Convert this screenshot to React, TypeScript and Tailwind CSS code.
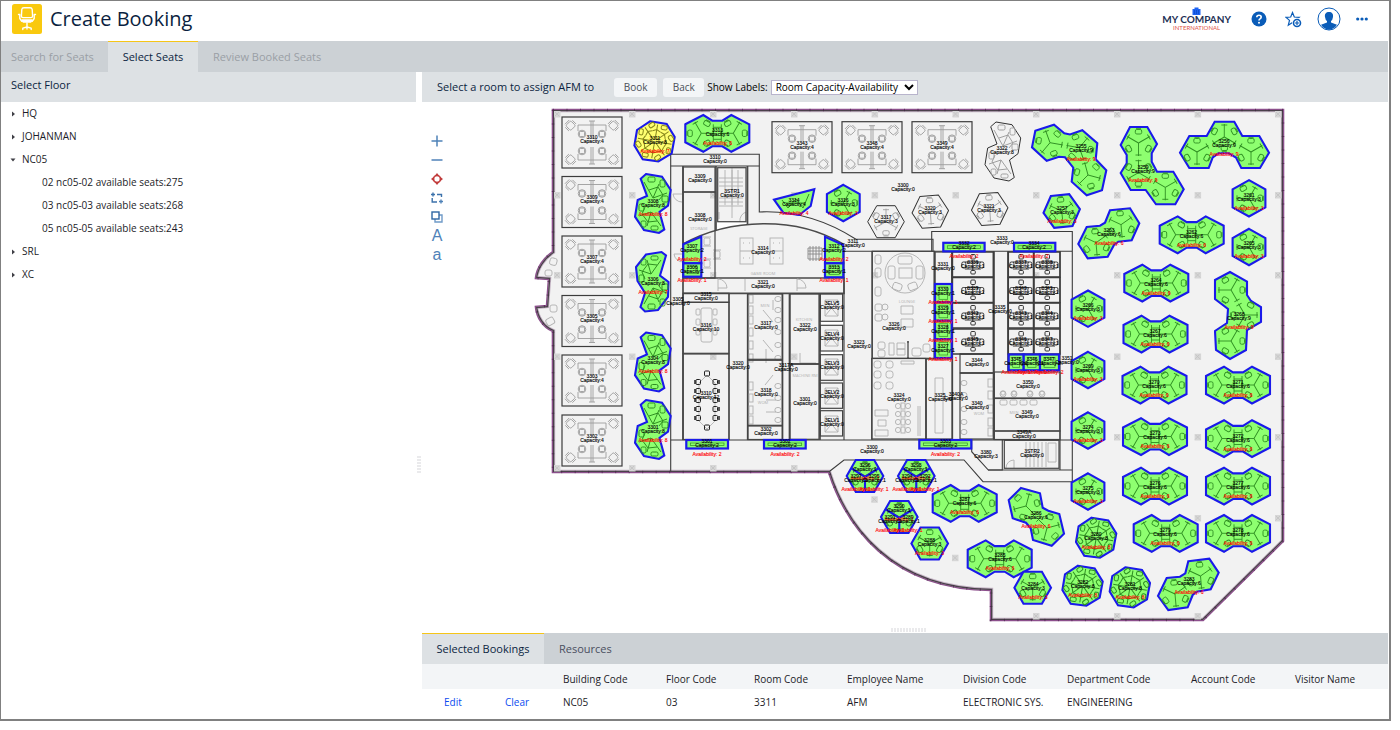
import React, { useState } from "react";

type Pt = [number, number];
type Tone = "green" | "yellow" | "plain";

const FILLS: Record<Tone, string> = { green: "#8eff70", yellow: "#ffff70", plain: "#f2f2f2" };
const INK: Record<Tone, string> = { green: "#2f8f22", yellow: "#85851a", plain: "#a0a0a0" };

const ROOM_BLUE = "#1a1aea";

/* ---------- furniture ---------- */

function Pod({ x, y, r = 0, c = INK.green }: { x: number; y: number; r?: number; c?: string }) {
  return (
    <g transform={`translate(${x} ${y}) rotate(${r})`} fill="none" stroke={c} strokeWidth={0.9}>
      {[0, 120, 240].map((a) => (
        <g key={a} transform={`rotate(${a})`}>
          <path d="M0 0H13M12 -3V3" />
          <g transform="rotate(60) translate(11 0)">
            <rect x={-2} y={-3.2} width={4.5} height={6.4} rx={1.5} />
            <path d="M3.3 -2.5V2.5" />
          </g>
        </g>
      ))}
    </g>
  );
}

function Desk({ x, y }: { x: number; y: number }) {
  return (
    <g transform={`translate(${x} ${y})`}>
      <rect width={60} height={51} fill="#f2f2f2" stroke="#3c3c3c" strokeWidth={1.2} />
      <g fill="none" stroke="#9c9c9c" strokeWidth={0.9}>
        <path d="M16 8H44M16 43H44M16 8V14M44 8V14M16 37V43M44 37V43M29 4V21M31 4V21M29 30V47M31 30V47M27 4H33M27 47H33" />
        {[
          [9, 9, 45],
          [51, 9, 135],
          [9, 42, -45],
          [51, 42, 225],
        ].map(([cx, cy, r]) => (
          <g key={`${cx}-${cy}`} transform={`translate(${cx} ${cy}) rotate(${r})`}>
            <rect x={-4} y={-3.5} width={7} height={7} rx={1.5} />
            <path d="M-5.5 -3V3M-3 -5H2M-3 5H2" />
          </g>
        ))}
        {[
          [20, 17],
          [40, 17],
          [20, 34],
          [40, 34],
        ].map(([cx, cy]) => (
          <g key={`${cx}-${cy}`}>
            <circle cx={cx} cy={cy} r={3.8} />
            <rect x={cx - 2.5} y={cy - 2.5} width={5} height={5} rx={1} />
          </g>
        ))}
      </g>
    </g>
  );
}

function Shape({ pts, tone = "green" }: { pts: Pt[]; tone?: Tone }) {
  return (
    <polygon
      points={pts.map((p) => p.join(",")).join(" ")}
      fill={FILLS[tone]}
      stroke={tone === "plain" ? "#333" : ROOM_BLUE}
      strokeWidth={tone === "plain" ? 1 : 2.1}
    />
  );
}

const DUMBBELL: Pt[] = [
  [-32, -9], [-14, -18.3], [-5, -12.6], [5, -12.6], [14, -18.3], [32, -9],
  [32, 9], [14, 18.5], [5, 13], [-5, 13], [-14, 18.5], [-32, 9],
];
const OCTAGON: Pt[] = [
  [-4.7, -20], [12, -17.3], [20, -4.3], [17, 12], [3.7, 20], [-12, 18], [-20.3, 4.3], [-17.7, -11.3],
];
const HEX_TALL: Pt[] = [[0, -18.2], [16.4, -9], [16.4, 9], [0, 18.2], [-16.4, 9], [-16.4, -9]];
const HEX_FLAT: Pt[] = [[-9.2, -16], [9.2, -16], [18.3, 0], [9.2, 16], [-9.2, 16], [-18.3, 0]];
const KIDNEY: Pt[] = [
  [-7, -30], [9, -27.3], [17.7, -14], [15, 1.7], [6.5, 8], [11.3, 25.5],
  [6, 29], [-9, 26], [-18, 12.7], [-15.3, -4], [-6, -8], [-12.3, -25.3],
];

function Dumbbell({ x, y }: { x: number; y: number }) {
  return (
    <g transform={`translate(${x} ${y})`}>
      <Shape pts={DUMBBELL} />
      <Pod x={-16} y={0} r={0} />
      <Pod x={16} y={0} r={180} />
      <path d="M-4 -9V9M4 -9V9M-4 -6H4M-4 6H4" stroke={INK.green} strokeWidth={0.9} fill="none" />
    </g>
  );
}

function Octagon({ x, y, tone = "green" }: { x: number; y: number; tone?: Tone }) {
  return (
    <g transform={`translate(${x} ${y})`}>
      <Shape pts={OCTAGON} tone={tone} />
      <g fill="none" stroke={INK[tone]} strokeWidth={1}>
        {[0, 45, 90, 135, 180, 225, 270, 315].map((a) => (
          <g key={a} transform={`rotate(${a + 10})`}>
            <path d="M2 0H17M10 -4L12 0L10 4" />
            <rect x={13} y={4} width={4} height={6} rx={1.5} />
          </g>
        ))}
      </g>
    </g>
  );
}

function Hex({ x, y, flat, r = 0, pod = 30, tone = "green" }: { x: number; y: number; flat?: boolean; r?: number; pod?: number; tone?: Tone }) {
  return (
    <g transform={`translate(${x} ${y}) rotate(${r})`}>
      <Shape pts={flat ? HEX_FLAT : HEX_TALL} tone={tone} />
      <Pod x={0} y={0} r={pod} c={INK[tone]} />
    </g>
  );
}

function Fan({ c }: { c: string }) {
  return (
    <g fill="none" stroke={c} strokeWidth={1}>
      <path d="M0 -6L-9 -22M0 -6L6 -20M0 -6L14 -11M-4 -14L5 -17L10 -9L6 -4" />
      <path d="M-2 8L8 22M-2 8L-6 22M-2 8L-14 12M4 17L-5 18L-11 10L-8 3" />
      <rect x={-5} y={-27} width={7} height={5} rx={1.5} />
      <rect x={7} y={-24} width={5} height={7} rx={1.5} />
      <rect x={9} y={-8} width={6} height={6} rx={1.5} />
      <rect x={-2} y={22} width={7} height={4} rx={1.5} />
      <rect x={-12} y={17} width={5} height={6} rx={1.5} />
      <rect x={-14} y={0} width={5} height={7} rx={1.5} />
    </g>
  );
}

function Kidney({ x, y, tone = "green" }: { x: number; y: number; tone?: Tone }) {
  return (
    <g transform={`translate(${x} ${y})`}>
      <Shape pts={KIDNEY} tone={tone} />
      <Fan c={INK[tone]} />
    </g>
  );
}

function TriHex({ x, y }: { x: number; y: number }) {
  return (
    <g transform={`translate(${x} ${y})`}>
      <Shape pts={HEX_FLAT} />
      <Pod x={0} y={0} r={-30} />
      <path d="M-14 -8L0 1L14 -8M0 1V16" fill="none" stroke={ROOM_BLUE} strokeWidth={2.1} />
    </g>
  );
}

const BRANCHED: { pts: Pt[]; pods: [number, number, number][] }[] = [
  {
    pts: [[1035.3, 130.7], [1054, 124.7], [1064.3, 133.3], [1070, 134.5], [1082.3, 130.3], [1097.3, 143.3], [1095.7, 159.3], [1106.3, 170.3], [1102, 190.3], [1086.7, 195.3], [1071.7, 181.7], [1073.3, 167.7], [1065, 157.3], [1059, 156.7], [1046.7, 160.7], [1032, 147.3]],
    pods: [[1050, 142.7, 10], [1079.3, 147.7, 70], [1088, 175, 15]],
  },
  {
    pts: [[1130, 127], [1147.3, 127], [1157, 144], [1151.7, 153.3], [1151.7, 161.7], [1157, 171.7], [1173.3, 171.7], [1183.7, 189.3], [1175.3, 204.3], [1156, 204.3], [1145.7, 190], [1130.7, 190], [1120.7, 173], [1126.7, 163.3], [1126.7, 155], [1120.7, 145]],
    pods: [[1138.5, 143, 90], [1138.5, 172.7, 30], [1165.3, 187.3, 90]],
  },
  {
    pts: [[1214.7, 121.7], [1234.3, 121.7], [1242.3, 136], [1259.3, 136], [1269, 152.7], [1260, 168], [1241.3, 168], [1236, 157.5], [1229, 153.3], [1218.5, 153.3], [1212.7, 157.5], [1208.7, 168], [1189.3, 168], [1180, 152.7], [1189.3, 136], [1206.7, 136]],
    pods: [[1197, 152, 90], [1224.3, 137, 30], [1251, 152, 90]],
  },
  {
    pts: [[1110, 210.3], [1130, 208.3], [1139.3, 223.3], [1131.7, 240.3], [1118.3, 241.7], [1114, 245], [1107.7, 256.7], [1087.7, 258.3], [1078.3, 244], [1086.7, 227], [1100, 225.7], [1105, 222.7]],
    pods: [[1121, 224.7, 85], [1096, 242.7, -35]],
  },
  {
    pts: [[1215, 280], [1230, 272], [1247, 281.7], [1247, 295], [1251, 301], [1261, 307], [1261, 322], [1247, 330], [1246, 350], [1230, 359], [1216, 350], [1215, 331], [1227, 323], [1228, 309], [1215, 299]],
    pods: [[1231, 290, 60], [1245, 315, 0], [1231, 341, -60]],
  },
  {
    pts: [[1021, 488], [1040, 493.3], [1042.7, 507.7], [1048.3, 510.7], [1059.3, 514], [1064, 533.7], [1051.7, 545.7], [1033, 540], [1030.7, 528.3], [1026, 522.7], [1012.7, 518.3], [1008.7, 500]],
    pods: [[1026, 506, 45], [1047, 528, -135]],
  },
  {
    pts: [[1188.3, 561.3], [1209.3, 558.7], [1218.7, 572.7], [1210.7, 589.3], [1196.7, 591.7], [1192.7, 595], [1187.7, 607.3], [1168.3, 610], [1158, 596], [1166.7, 578], [1180, 576.7], [1185.3, 573.3]],
    pods: [[1200.5, 576, 85], [1175, 594, -35]],
  },
];

/* ---------- rooms ---------- */

const WALLS: [number, number, number, number][] = [
  [683, 167, 32, 25], [683, 192, 32, 86], [717.7, 167.7, 28.3, 54],
  [683, 293.3, 46, 9], [683, 302.3, 46, 51], [683, 354, 46, 85.5],
  [747.7, 294, 34.7, 65.3], [747.7, 360.3, 34.7, 65], [747.7, 426, 34.7, 13.5],
  [790, 294, 29, 69.7], [790, 364.3, 29, 75],
  [820.3, 294, 22.3, 27.3], [820.3, 325.3, 22.3, 25.7], [820.3, 354.7, 22.3, 25.6], [820.3, 383, 22.3, 25.3], [820.3, 410.7, 22.3, 25.3],
  [872.3, 251.3, 62, 107], [871.7, 358.5, 54, 80.5], [926.3, 359, 26, 80],
  [935, 252, 16.7, 31.7],
  [960, 354, 33.3, 18.7], [960, 373.3, 33.3, 65.7],
  [994.3, 372, 65.7, 26], [994.3, 398.5, 65.7, 32.5], [994.3, 431, 65.7, 8.5], [1004.3, 440.3, 54.7, 28],
];

const OFFICE_ROWS = [252, 277.5, 303, 329];
const OFFICES: [number, number, number][] = OFFICE_ROWS.flatMap(
  (y): [number, number, number][] => [[952.3, y, 41], [1008.3, y, 25.2], [1034, y, 26]],
);

const AVAILABLE_BOXES: [number, number, number, number][] = [
  [683.3, 263.3, 18, 13.4], [825, 263.3, 18.3, 14],
  [686.3, 440, 41.7, 8.5], [764, 440, 41.7, 8.5], [943.3, 242.8, 41.3, 8.5], [1014, 242.8, 41.3, 8.5], [919.3, 440, 52, 8.5],
  [935, 284, 16.7, 18.3], [935, 302.3, 16.7, 18.5], [935, 320.8, 16.7, 18.5], [935, 339.3, 16.7, 18.7],
  [1008.7, 354.5, 15, 15.8], [1023.7, 354.5, 16.3, 15.8], [1040, 354.5, 19, 15.8],
];

const COLUMNS: Pt[] = [
  ...[557, 632, 713, 794, 874.6, 955.5, 1036, 1117, 1197.6, 1278].map((x): Pt => [x, 114]),
  ...[557, 632, 713, 794, 874.6, 955.5, 1036, 1117, 1197.6, 1278].map((x): Pt => [x, 195]),
  ...[557, 632, 713, 874.6, 1036, 1117, 1197.6, 1278].map((x): Pt => [x, 275]),
  ...[557, 632, 713, 794, 1117, 1197.6, 1278].map((x): Pt => [x, 356.5]),
  ...[1117, 1197.6, 1278].map((x): Pt => [x, 437]),
  ...[557, 632, 713, 794].map((x): Pt => [x, 468]),
  [874.3, 499.3], [955, 557.7], [1197.6, 518], [1278, 518], [1036, 616], [1117, 616], [1197.6, 616],
];

/* id, x, y of the capacity line, capacity, availability */
type Label = [string, number, number, number, number?];

const LABELS: Label[] = [
  ["3310", 592, 141, 4], ["3309", 592, 201, 4], ["3307", 592, 261, 4], ["3305", 592, 320, 4], ["3303", 592, 380, 4], ["3302", 592, 440, 4],
  ["3343", 802, 147, 4], ["3348", 872, 147, 4], ["3349", 942, 147, 4],
  ["3311", 655, 142, 8, 7], ["3313", 717.5, 134, 6, 6], ["3310", 715, 161, 0],
  ["3308", 653, 204.5, 8, 8], ["3306", 653, 283, 8, 7], ["3304", 653, 362, 8, 8], ["3301", 653, 431, 8, 8],
  ["3309", 700, 180, 0], ["3STR1", 732, 195, 0], ["3308", 700, 219, 0], ["3307", 692, 250, 2, 2], ["3306", 692, 271, 1, 1],
  ["3314", 763, 252, 0], ["3321", 763, 286, 0], ["3312", 834, 250, 2, 2], ["3313", 834, 271, 1, 1], ["3311", 853, 245, 0],
  ["3314", 794, 204, 4, 4], ["3316", 843, 204, 3, 3], ["3300", 903, 189, 0], ["3317", 886, 221, 3], ["3320", 930, 212, 3], ["3321", 989, 210, 3],
  ["3322", 1002, 152, 8], ["3333", 1002, 242, 0],
  ["3332", 964, 247, 2, 2], ["3334", 1034, 247, 2, 2], ["3331", 943, 268, 0],
  ["3330", 943, 293, 1, 1], ["3329", 943, 312, 1, 1], ["3328", 943, 331, 1, 1], ["3327", 943, 350, 1, 1],
  ["3315", 706, 298, 0], ["3316", 706, 329, 10], ["3310", 706, 397, 12], ["3317", 766, 327, 0], ["3318", 766, 394, 0], ["3302", 766, 433, 0], ["3320", 738, 367, 0], ["3317A", 786, 369, 0],
  ["3322", 805, 329, 0], ["3301", 805, 403, 0], ["3305", 678, 303, 0],
  ["3ELV5", 832, 307, 0], ["3ELV4", 832, 338, 0], ["3ELV3", 832, 367, 0], ["3ELV2", 832, 396, 0], ["3ELV1", 832, 424, 0],
  ["3323", 859, 346, 0], ["3326", 894, 328, 0], ["3324", 899, 399, 0], ["3325", 940, 399, 0], ["3340A", 956, 398, 0], ["3344", 977, 364, 0], ["3340", 977, 407, 0],
  ["3335", 1000, 311, 0], ["3350", 1028, 386, 0], ["3349", 1027, 416, 0], ["3349A", 1024, 436, 0], ["3STR2", 1032, 455, 0], ["3380", 986, 456, 3], ["3351", 1067, 362, 0],
  ["3301", 707, 445, 2, 2], ["3302", 785, 445, 2, 2], ["3303", 945.5, 445, 2, 2], ["3300", 872, 451, 0],
  ["3345", 1016, 363, 1, 1], ["3346", 1032, 363, 1, 1], ["3347", 1049, 363, 2, 2],
  ...OFFICES.map(([x, y, w], i): Label => [String(3336 + i), x + w / 2, y + 14, 1]),
  ["3255", 1081, 150, 9, 9], ["3259", 1143, 171, 9, 9], ["3256", 1224, 145, 9, 9], ["3257", 1062, 212, 3, 3], ["3261", 1249, 199, 3, 3], ["3265", 1249, 247, 3, 3],
  ["3263", 1109, 234, 6, 6], ["3262", 1191.5, 236, 6, 6], ["3264", 1156, 284, 6, 6], ["3266", 1088, 309, 3, 3], ["3267", 1155, 335, 6, 6], ["3268", 1239, 318, 9, 9],
  ["3269", 1088, 370, 3, 3], ["3270", 1154, 386, 6, 6], ["3271", 1238, 386, 6, 6], ["3274", 1088, 431, 3, 3], ["3273", 1155, 437, 6, 6], ["3272", 1238, 440, 6, 6],
  ["3275", 1088, 492, 3, 3], ["3276", 1155, 487, 6, 6], ["3277", 1238, 487, 6, 6], ["3279", 1165, 534, 6, 6], ["3278", 1238, 534, 6, 6],
  ["3280", 1096, 538, 8, 8], ["3282", 1082.7, 586, 8, 8], ["3281", 1130, 587.5, 8, 8], ["3283", 1189, 583, 6, 6],
  ["3286", 1036, 517, 6, 6], ["3287", 964.5, 503, 6, 6], ["3285", 1000, 559, 6, 6], ["3284", 1033, 587.5, 3, 3], ["3288", 929.5, 544, 3, 3],
  ["3296", 865, 469, 1, 1], ["3297", 856, 480, 1, 1], ["3295", 874, 480, 1, 1],
  ["3293", 916, 469, 1, 1], ["3294", 907, 480, 1, 1], ["3292", 925, 480, 1, 1],
  ["3290", 899, 510, 1, 1], ["3291", 890, 521, 1, 1], ["3289", 908, 521, 1, 1],
];

function Office({ x, y, w }: { x: number; y: number; w: number }) {
  const cx = x + w / 2;
  return (
    <g fill="none" stroke="#222" strokeWidth={0.9}>
      <rect x={x} y={y} width={w} height={25} stroke="#3c3c3c" strokeWidth={1.5} />
      <rect x={cx - 2} y={y + 2.5} width={4.5} height={4.5} rx={1} />
      <rect x={cx - 2} y={y + 18.5} width={4.5} height={3.5} rx={1} />
      <path d={`M${cx - 8} ${y + 10}H${cx + 8}M${cx - 8} ${y + 17}H${cx + 8}M${cx} ${y + 8}V${y + 18}`} />
      <rect x={cx - 11} y={y + 10} width={4} height={6} rx={1.5} />
      <rect x={cx + 7} y={y + 10} width={4} height={6} rx={1.5} />
      <path d={`M${cx - 5} ${y + 9}V${y + 12}M${cx + 5} ${y + 9}V${y + 12}`} />
    </g>
  );
}

function LightFurniture() {
  return (
    <g fill="none" stroke="#b0b0b0" strokeWidth={0.9}>
      <circle cx={905} cy={273} r={20} />
      <rect x={899} y={268} width={13} height={10} />
      <rect x={898} y={256} width={14} height={8} rx={2} />
      <rect x={888} y={266} width={7} height={13} rx={2} />
      <rect x={916} y={266} width={7} height={13} rx={2} />
      <rect x={893} y={283} width={9} height={7} rx={2} transform="rotate(20 897 286)" />
      <rect x={908} y={283} width={9} height={7} rx={2} transform="rotate(-20 912 286)" />
      <path d="M901 306h12v8h-12zM901 319h12v8h-12zM889 343h5v12h-5zM897 343h8v6h-8zM897 349h8v6h-8zM908 343v14" />
      <rect x={912} y={348} width={9} height={8} rx={2} />
      <rect x={923} y={344} width={7} height={8} rx={2} />
      {[255, 268, 287].map((y) => (
        <rect key={y} x={875} y={y} width={6} height={9} rx={2} />
      ))}
      {[307, 317].map((y) => (
        <g key={y}>
          <rect x={875} y={y - 3} width={7} height={7} rx={2} />
          <circle cx={885} cy={y} r={3} />
        </g>
      ))}
      <rect x={878} y={342} width={7} height={7} rx={2} />
      <rect x={878} y={350} width={7} height={7} rx={2} />
      {[361, 371, 382].map((y) => (
        <g key={y}>
          <rect x={874} y={y} width={7} height={7} rx={2.5} />
          <rect x={886} y={y} width={7} height={7} rx={2.5} />
        </g>
      ))}
      {[406, 414, 422, 430].map((y) => (
        <g key={y}>
          <circle cx={898} cy={y} r={2.6} />
          <rect x={901} y={y - 3} width={4} height={6} />
          <circle cx={908} cy={y} r={2.6} />
        </g>
      ))}
      <path d="M875 410h13v6h-13zM875 430h13v6h-13zM878 420h8v6h-8zM901 361h13v3h-13zM920 406v30M918 406v30M935 378h8v55h-8z" />
      <rect x={740} y={238} width={13} height={26} />
      <rect x={770} y={238} width={13} height={26} />
      <path d="M740 251h13M770 251h13M743 243h1M749 243h1M743 258h1M749 258h1M773 243h1M779 243h1M773 258h1M779 258h1" strokeWidth={1.2} />
      {[[707, 241], [717, 254], [707, 263]].map(([x, y]) => (
        <g key={`${x}-${y}`}>
          <rect x={x - 3} y={y - 3} width={6} height={7} rx={1.5} />
          <path d={`M${x - 4} ${y - 4}h8M${x - 4} ${y + 5}h8`} />
        </g>
      ))}
      <path d="M808 248h14v11h-14zM810 246v15M813 246v15M816 246v15M819 246v15M808 251h14M808 254h14" stroke="#888" />
      <rect x={701} y={308} width={11} height={34} rx={2} />
      {[313, 323, 333].map((y) => (
        <g key={y}>
          <rect x={696} y={y - 4} width={4} height={6} rx={1} />
          <rect x={713} y={y - 4} width={4} height={6} rx={1} />
        </g>
      ))}
      {[299, 310, 320, 332, 345, 358, 386, 398, 410, 420].map((y) => (
        <g key={y}>
          <rect x={749} y={y - 4} width={4} height={8} />
          <ellipse cx={778} cy={y} rx={3.2} ry={2.6} />
        </g>
      ))}
      <path d="M763 310l10 12M773 300v10M763 340l10 12M766 349v14M765 385l8-10M766 400h10M766 412h10M719 212v7M800 353v10h16" />
      {[300, 330, 359, 388, 416].map((y) => (
        <path key={y} d={`M825 ${y}h13v16h-13zM825 ${y}l13 16M838 ${y}l-13 16`} />
      ))}
      {[725, 732, 738].map((x) => (
        <path key={x} d={`M${x} 170V205`} />
      ))}
      <path d="M719 178h24M719 182h24M719 186h24M719 198h24M719 202h24M719 206h24M732 168v50" />
      {[1026, 1030, 1034, 1038, 1042, 1046].map((x) => (
        <path key={x} d={`M${x} 442V467`} />
      ))}
      <path d="M1048 443h8v19h-8zM1006 468a8 8 0 0 1 8-8v8" />
      <path d="M718 291v-12a9 9 0 0 1 9 9h-9M745 291v-12M797 291v-12a9 9 0 0 1 9 9h-9M682 202a9 9 0 0 1-9-8h9M683 262a9 9 0 0 1-9-8h9M740 222a9 9 0 0 1 6-10v10" />
      {[1000, 1010, 1020, 1030].map((x) => (
        <rect key={x} x={x} y={400} width={7} height={5} rx={1.5} />
      ))}
      {[1003, 1014, 1030, 1042].map((x) => (
        <g key={x}>
          <circle cx={x} cy={394} r={3} />
          <rect x={x - 2} y={391} width={4} height={4} rx={1} />
        </g>
      ))}
      {[383, 395, 409, 422, 432].map((y) => (
        <g key={y}>
          <rect x={988} y={y - 4} width={5} height={8} />
          <ellipse cx={964} cy={y} rx={3} ry={2.6} />
        </g>
      ))}
      <rect x={550} y={258} width={7} height={7} rx={2} transform="rotate(15 553 261)" />
      <rect x={545} y={270} width={7} height={6} rx={2} />
      <rect x={550} y={305} width={7} height={7} rx={2} />
      <rect x={546} y={318} width={8} height={7} rx={2} transform="rotate(-30 550 321)" />
    </g>
  );
}

const OUTLINE =
  "M553 110H1283V541L1203 620H991V590C890 589 846 525 829 472H553V331C543 327 537 317 536 307L547 306L549 279L536 278C537 268 544 258 553 252Z";

function FloorPlan() {
  return (
    <svg viewBox="452 102 936 525" className="block w-full min-w-0 flex-1" role="img" aria-label="Floor plan NC05-03">
      <clipPath id="building">
        <path d={OUTLINE} />
      </clipPath>
      <path d={OUTLINE} fill="#f2f2f2" stroke="#8c4f8c" strokeWidth={2.6} />
      <g clipPath="url(#building)" fill="none">
        <path d={OUTLINE} stroke="#c4b4c4" strokeWidth={4.4} />
        <path d={OUTLINE} stroke="#4a414a" strokeWidth={2.6} />
      </g>
      <path d={OUTLINE} fill="none" stroke="#3f1f3f" strokeOpacity={0.6} strokeWidth={2.6} strokeDasharray="1 12.5" />
      {COLUMNS.map(([x, y]) => (
        <g key={`${x}-${y}`}>
          <rect x={x - 3} y={y - 3} width={6.5} height={6.5} fill="#d6d6d6" />
          <path d={`M${x - 2} ${y - 2}l4.5 4.5M${x + 2} ${y - 2}l-4.5 4.5`} stroke="#c2c2c2" strokeWidth={0.8} />
        </g>
      ))}

      <path d="M716 222.5h32v2l-32 5.5z" fill="#fff" />
      <path d="M820 321.3h23v4h-23zM820 351h23v3.7h-23z" fill="#fff" />
      <g fill="none" stroke="#3c3c3c" strokeWidth={1.1}>
        <path d="M670.7 471V154.3H759.3V212C800 210 832 224 856 239.3H933V251.3H844" />
        <path d="M670.7 166H759.3M931.7 251.3V231.5H1072.3V481.7H983L964 460H844L830 471M933 251.3H1072.3" />
        <path d="M670.7 440H1072M844 251.3V440M872 251.3V440M1060 251V470M988 470H1072M729 293V440M960 354H994" />
        <path d="M971.7 439.5V451.7L988.3 470H1002.3V439.5" />
      </g>
      <g fill="none" stroke="#4a4a4a" strokeWidth={1.7}>
        <path d="M683 166V440M716 166V230M747.5 166V224" />
        <path d="M683 244C730 218 796 216 843 244" />
        <path d="M683 278H844V293.3H683M747.7 293V440M758 440M782.5 293V440M789.5 293V440M820 293V440" />
        <path d="M934.5 251V358M952.3 251V440M994 251V440M1008 251V372M908 341v17" />
      </g>
      <LightFurniture />
      {WALLS.map(([x, y, w, h]) => (
        <rect key={`${x}-${y}`} x={x} y={y} width={w} height={h} fill="none" stroke="#444" strokeWidth={1.2} />
      ))}
      {OFFICES.map(([x, y, w]) => (
        <Office key={`${x}-${y}`} x={x} y={y} w={w} />
      ))}
      <g fill="none" stroke="#222" strokeWidth={1}>
        <path d="M707 375L699 383V421L707 429L715 421V383Z" stroke="#bbb" />
        {[382, 391, 400, 409, 418].map((y) => (
          <g key={y}>
            <rect x={696} y={y - 2.5} width={4.5} height={5} rx={1} />
            <path d={`M695 ${y - 2}v4`} strokeWidth={1.5} />
            <rect x={713} y={y - 2.5} width={4.5} height={5} rx={1} />
            <path d={`M719 ${y - 2}v4`} strokeWidth={1.5} />
          </g>
        ))}
        <rect x={704.5} y={371} width={5} height={5} rx={1} />
        <rect x={704.5} y={425} width={5} height={5} rx={1} />
      </g>
      <g fill="#b0b0b0" fontSize={4} textAnchor="middle">
        <text x={699} y={230}>STORAGE</text>
        <text x={763} y={275}>GAME ROOM</text>
        <text x={907} y={303}>LOUNGE</text>
        <text x={765} y={307}>MEN</text>
        <text x={763} y={404}>WOM</text>
        <text x={804} y={321}>KITCHEN</text>
        <text x={805} y={377}>MACHINE RM</text>
        <text x={979} y={415}>WOM</text>
        <text x={1014} y={414}>MEN</text>
      </g>

      {[117, 176.5, 236, 295.5, 355, 415].map((y) => (
        <Desk key={y} x={562} y={y} />
      ))}
      {[772, 842, 912].map((x) => (
        <Desk key={x} x={x} y={121.7} />
      ))}

      <Octagon x={654.7} y={141.3} tone="yellow" />
      <Octagon x={1096.3} y={537.7} />
      <Octagon x={1082.7} y={585.7} />
      <Octagon x={1130} y={587.3} />
      {[204, 362.5, 430].map((y) => (
        <Kidney key={y} x={653} y={y} />
      ))}
      <g transform="translate(653 282) scale(1 -1)">
        <Shape pts={[[-7, 27.5], [8.5, 30], [13, 26.5], [7, 6.5], [15.5, 0], [15, -15], [5, -28], [-8, -29.5], [-12.5, -25], [-8, -11], [-15.5, 1], [-17, 15]]} />
        <Fan c={INK.green} />
      </g>
      <Kidney x={1003} y={152} tone="plain" />
      {([[717.3, 133.3], [1191.7, 234.7], [1156.3, 283], [1155.5, 334], [1154.5, 385], [1238, 385], [1155, 436.5], [1238, 438.5], [1155, 486], [1238, 486], [1165.7, 533.3], [1238, 533.3], [964.7, 503.3], [999.7, 558.7]] as Pt[]).map(([x, y]) => (
        <Dumbbell key={`${x}-${y}`} x={x} y={y} />
      ))}
      {([[843.3, 203], [1249, 198.3], [1249, 247], [1088, 308.7], [1088, 370], [1088, 430.5], [1088, 491.5]] as Pt[]).map(([x, y]) => (
        <Hex key={`${x}-${y}`} x={x} y={y} pod={60} />
      ))}
      <Hex x={929.7} y={543.5} flat pod={-30} />
      <Hex x={1032.7} y={587.7} flat pod={-30} />
      <Hex x={1061.7} y={211} flat r={-6} pod={-30} />
      <Hex x={886} y={221.7} flat tone="plain" pod={30} />
      <Hex x={930.3} y={211.7} flat r={-4} tone="plain" pod={-30} />
      <Hex x={989.7} y={209} flat r={-4} tone="plain" pod={-30} />
      {BRANCHED.map(({ pts, pods }) => (
        <g key={pts[0].join("-")}>
          <Shape pts={pts} />
          {pods.map(([x, y, r]) => (
            <Pod key={`${x}-${y}`} x={x} y={y} r={r} />
          ))}
        </g>
      ))}
      <Shape pts={[[814.3, 189.3], [810.7, 206], [799.3, 215], [783.3, 212.7], [774, 199.7]]} />
      <path d="M782 200l6 8 8-9 7 9 6-14M786 203h18" fill="none" stroke={INK.green} />
      <Shape pts={[[683.3, 244.3], [701.3, 236.7], [701.3, 263.3], [683.3, 263.3]]} />
      <Shape pts={[[825, 236.7], [843.3, 245], [843.3, 263.3], [825, 263.3]]} />
      {AVAILABLE_BOXES.map(([x, y, w, h]) => (
        <g key={`${x}-${y}`}>
          <rect x={x} y={y} width={w} height={h} fill={FILLS.green} stroke={ROOM_BLUE} strokeWidth={2.2} />
          <rect x={x + 4} y={y + 3} width={w - 8} height={h - 6} fill="none" stroke={INK.green} strokeWidth={0.7} />
        </g>
      ))}
      <TriHex x={865} y={476} />
      <TriHex x={916.3} y={476} />
      <TriHex x={899.3} y={517} />

      <g fontSize={5} textAnchor="middle" fontFamily="Liberation Sans, sans-serif" strokeWidth={0.12}>
        {LABELS.map(([id, x, y, cap, avail]) => (
          <g key={`${id}-${x}-${y}`} fill="#000" stroke="#000">
            <text x={x} y={y - 2}>{id}</text>
            <text x={x} y={y + 2}>Capacity:{cap}</text>
            {avail !== undefined && (
              <text x={x} y={y + 11} fill="#ff0000" stroke="#ff0000">Availability: {avail}</text>
            )}
          </g>
        ))}
      </g>
    </svg>
  );
}

/* ---------- page chrome ---------- */

function SeatLogo() {
  return (
    <svg viewBox="0 0 30 30" className="size-[30px]" aria-hidden="true">
      <rect width={30} height={30} rx={2.5} fill="#f9c90e" />
      <g fill="none" stroke="#fff" strokeWidth={1.4} strokeLinecap="round" strokeLinejoin="round">
        <path d="M12 3.8H18Q20 3.8 20.2 5.5L20.6 12Q20.6 13.6 19 13.6H11Q9.4 13.6 9.4 12L9.8 5.5Q10 3.8 12 3.8Z" />
        <path d="M6.5 10.5H7.8V14.5L9.8 17.3M23.5 10.5H22.2V14.5L20.2 17.3" />
        <path d="M15 19V25M10.8 25.5V24.2L15 23L19.2 24.2V25.5" />
      </g>
      <path d="M9.5 15.3H20.5V17L19 18.8H11L9.5 17Z" fill="#fff" />
    </svg>
  );
}

function CompanyLogo() {
  return (
    <a href="#home" className="flex flex-col items-center font-['Lato',sans-serif]">
      <svg viewBox="0 0 9 8" className="h-2 w-[9px]" aria-hidden="true">
        <path d="M.5 2H2.5V.5H6.5V2H8.5V8H.5Z" fill="#1d63f2" />
        <path d="M2.5 3v4M4.5 3v4M6.5 3v4" stroke="#0c48c4" strokeWidth={0.7} />
      </svg>
      <span className="text-[10px] leading-[9px] font-bold text-[#1d2f55]">MY COMPANY</span>
      <span className="text-[6px] leading-[7px] text-[#e0564a]">INTERNATIONAL</span>
    </a>
  );
}

const BLUE = "#0a5cb8";

function HeaderActions() {
  return (
    <div className="flex items-center">
      <CompanyLogo />
      <button aria-label="Help" className="ml-5">
        <svg viewBox="0 0 16 16" className="size-4">
          <circle cx={8} cy={8} r={7.5} fill={BLUE} />
          <path d="M5.8 6.2Q5.8 4.2 8 4.2T10.2 6.1Q10.2 7.2 9 7.9Q8 8.5 8 9.5" fill="none" stroke="#fff" strokeWidth={1.6} />
          <circle cx={8} cy={11.8} r={1} fill="#fff" />
        </svg>
      </button>
      <button aria-label="Add to favorites" className="ml-[18px]">
        <svg viewBox="0 0 17 17" className="size-[17px]">
          <path d="M7.5 1.5L9.3 6L14.2 6.3L10.5 9.4L11.6 14L7.5 11.5L3.3 14.2L4.5 9.4L.9 6.3L5.7 6Z" fill="none" stroke={BLUE} strokeWidth={1.2} />
          <circle cx={12} cy={12} r={5} fill="#fff" />
          <circle cx={12} cy={12} r={3.5} fill="#fff" stroke={BLUE} strokeWidth={1.6} />
          <path d="M12 10v4M10 12h4" stroke={BLUE} strokeWidth={1.2} />
        </svg>
      </button>
      <button aria-label="Account" className="ml-[15px]">
        <svg viewBox="0 0 24 24" className="size-6">
          <circle cx={12} cy={12} r={11} fill="#fff" stroke={BLUE} strokeWidth={1} />
          <path d="M12 5C15 5 16.5 7 16 10Q15.6 13 14 14V15.5L20 17.8Q17 22.5 12 22.7Q7 22.5 4 17.8L10 15.5V14Q8.4 13 8 10C7.5 7 9 5 12 5Z" fill={BLUE} />
        </svg>
      </button>
      <button aria-label="More" className="ml-[15px]">
        <svg viewBox="0 0 12 4" className="h-1 w-3">
          <circle cx={1.7} cy={2} r={1.6} fill={BLUE} />
          <circle cx={6} cy={2} r={1.6} fill={BLUE} />
          <circle cx={10.3} cy={2} r={1.6} fill={BLUE} />
        </svg>
      </button>
    </div>
  );
}

const TOOL = "#4f82b8";

const TOOLS: { label: string; icon: React.ReactNode }[] = [
  { label: "Zoom in", icon: <path d="M6 .5v11M.5 6h11" stroke={TOOL} strokeWidth={1.5} /> },
  { label: "Zoom out", icon: <path d="M.5 6h11" stroke={TOOL} strokeWidth={1.5} /> },
  {
    label: "Reset view",
    icon: (
      <g>
        <circle cx={6} cy={6} r={3.5} fill="none" stroke="#cf4a4a" strokeWidth={1.6} />
        <path d="M6 0L8.8 3.4H3.2ZM6 12L8.8 8.6H3.2ZM0 6L3.4 3.2V8.8ZM12 6L8.6 3.2V8.8Z" fill="#c03c3c" />
        <circle cx={6} cy={6} r={2.4} fill="#fff" />
      </g>
    ),
  },
  {
    label: "Zoom window",
    icon: (
      <g fill="none" stroke="#3c72ab" strokeWidth={1.4}>
        <path d="M2 .5v4M0 2.5h4M6 2.5h4.5V5M1.2 6v4H6" />
        <path d="M10 7.5v4M8 9.5h4" stroke={TOOL} />
      </g>
    ),
  },
  {
    label: "Layers",
    icon: (
      <g fill="none" strokeWidth={1.4}>
        <path d="M8 4h3v7H4V8" stroke="#6f9ac8" />
        <rect x={1} y={1} width={7} height={7} stroke="#2f66a3" />
      </g>
    ),
  },
];

function Toolbar() {
  return (
    <div className="flex w-[30px] shrink-0 flex-col items-center pt-[29px]">
      {TOOLS.map(({ label, icon }) => (
        <button key={label} aria-label={label} className="flex h-[19px] w-[18px] items-center justify-center">
          <svg viewBox="0 0 12 12" className="size-3">{icon}</svg>
        </button>
      ))}
      <button className="h-[19px] w-[18px] text-center font-['Liberation_Sans',sans-serif] text-[16px] leading-[19px] text-[#4f82b8]">A</button>
      <button className="h-[19px] w-[18px] text-center font-['Liberation_Sans',sans-serif] text-[16px] leading-[14px] text-[#4f82b8]">a</button>
    </div>
  );
}

const BUILDINGS = [
  { code: "HQ", floors: [] },
  { code: "JOHANMAN", floors: [] },
  { code: "NC05", floors: ["02 nc05-02 available seats:275", "03 nc05-03 available seats:268", "05 nc05-05 available seats:243"] },
  { code: "SRL", floors: [] },
  { code: "XC", floors: [] },
];

function FloorTree() {
  const [open, setOpen] = useState("NC05");
  return (
    <ul className="text-[10px] leading-[23px] text-[#1c1c28]">
      {BUILDINGS.map(({ code, floors }) => (
        <li key={code}>
          <button className="flex items-center pl-[9px]" aria-expanded={open === code} onClick={() => setOpen(open === code ? "" : code)}>
            <svg viewBox="0 0 6 6" className="mr-1.5 size-1.5" aria-hidden="true">
              <path d={open === code ? "M.5 1.5H5.5L3 4.5Z" : "M2 .5L5 3L2 5.5Z"} fill="#3f3f46" />
            </svg>
            {code}
          </button>
          {open === code && (
            <ul>
              {floors.map((f) => (
                <li key={f} className="pl-[41px]">
                  <button>{f}</button>
                </li>
              ))}
            </ul>
          )}
        </li>
      ))}
    </ul>
  );
}

const FIELDS = [
  { name: "Building Code", value: "NC05", width: "w-[103px]" },
  { name: "Floor Code", value: "03", width: "w-[88px]" },
  { name: "Room Code", value: "3311", width: "w-[93px]" },
  { name: "Employee Name", value: "AFM", width: "w-[116px]" },
  { name: "Division Code", value: "ELECTRONIC SYS.", width: "w-[104px]" },
  { name: "Department Code", value: "ENGINEERING", width: "w-[124px]" },
  { name: "Account Code", value: "", width: "w-[104px]" },
  { name: "Visitor Name", value: "", width: "" },
];

function BookingsTable() {
  return (
    <table className="w-full table-fixed text-left text-[10px] text-[#1c1c28]">
      <thead>
        <tr className="h-[25px] bg-[#f3f5f7]">
          <td className="w-[83px]" />
          <td className="w-[58px]" />
          {FIELDS.map((f) => (
            <th key={f.name} scope="col" className={`pt-1.5 font-medium ${f.width}`}>{f.name}</th>
          ))}
        </tr>
      </thead>
      <tbody>
        <tr className="h-[30px] align-top leading-[26px]">
          <td className="pl-[22px]"><button className="text-[#0a4cf0]">Edit</button></td>
          <td><button className="text-[#0a4cf0]">Clear</button></td>
          {FIELDS.map((f) => (
            <td key={f.name}>{f.value}</td>
          ))}
        </tr>
      </tbody>
    </table>
  );
}

export default function App() {
  return (
    <div className="mr-[9px] border-t border-r-2 border-b-2 border-l border-[#808080] bg-white pr-px font-['Open_Sans',sans-serif] text-[#0b1f41]">
      <header className="flex h-10 items-center justify-between pr-5 pl-[11px]">
        <div className="flex items-center gap-2 pb-1">
          <SeatLogo />
          <h1 className="text-[20px] leading-[28px]">Create Booking</h1>
        </div>
        <div className="pb-1"><HeaderActions /></div>
      </header>

      <nav className="flex h-[31px] bg-[#ccd1d5] text-[11px]">
        <button className="w-[107px] border-t border-transparent pl-2.5 text-left text-[#9a9fa5]">Search for Seats</button>
        <button className="w-[90px] border-t border-[#f5c518] bg-[#dde1e4]">Select Seats</button>
        <button className="border-t border-transparent px-[15px] text-[#9a9fa5]">Review Booked Seats</button>
      </nav>

      <main className="flex">
        <aside className="w-[415px] shrink-0">
          <h2 className="h-[30px] bg-[#dde1e4] pl-2.5 text-[11px] leading-[26px]">Select Floor</h2>
          <FloorTree />
        </aside>

        <div className="flex w-1.5 shrink-0 items-start justify-center pt-96" aria-hidden="true">
          <div className="h-[18px] w-1 bg-[repeating-linear-gradient(#eaeaec_0_2px,#fff_2px_3px)]" />
        </div>

        <section className="min-w-0 flex-1">
          <div className="flex h-[30px] items-center bg-[#dde1e4] pl-[15px]">
            <h2 className="text-[11px]">Select a room to assign AFM to</h2>
            <div className="ml-5 flex gap-1.5 text-[10px] text-[#4a4f57]">
              <button className="h-[19px] w-[43px] rounded-[3px] bg-[#f3f5f7]">Book</button>
              <button className="h-[19px] w-[41px] rounded-[3px] bg-[#f3f5f7]">Back</button>
            </div>
            <label htmlFor="labels" className="mr-[3px] ml-[3px] text-[10px] text-black">Show Labels:</label>
            <div className="flex h-[15px] w-[147px] items-center border border-[#b8b4cc] bg-white">
              <select id="labels" className="h-[17px] w-full shrink-0 bg-transparent text-[10px] text-black">
                <option>Room Capacity-Availability</option>
                <option>Room Code</option>
              </select>
            </div>
          </div>

          <div className="flex">
            <Toolbar />
            <FloorPlan />
          </div>

          <div className="flex h-1.5 items-center justify-center pl-2" aria-hidden="true">
            <div className="h-1 w-9 bg-[repeating-linear-gradient(90deg,#eaeaec_0_2px,#fff_2px_3px)]" />
          </div>

          <div className="flex h-[31px] bg-[#ccd1d5] text-[11px]">
            <button className="w-[122px] border-t border-[#f5c518] bg-[#dde1e4]">Selected Bookings</button>
            <button className="border-t border-transparent px-[15px] text-[#4a4f5f]">Resources</button>
          </div>
          <BookingsTable />
        </section>
      </main>
    </div>
  );
}
